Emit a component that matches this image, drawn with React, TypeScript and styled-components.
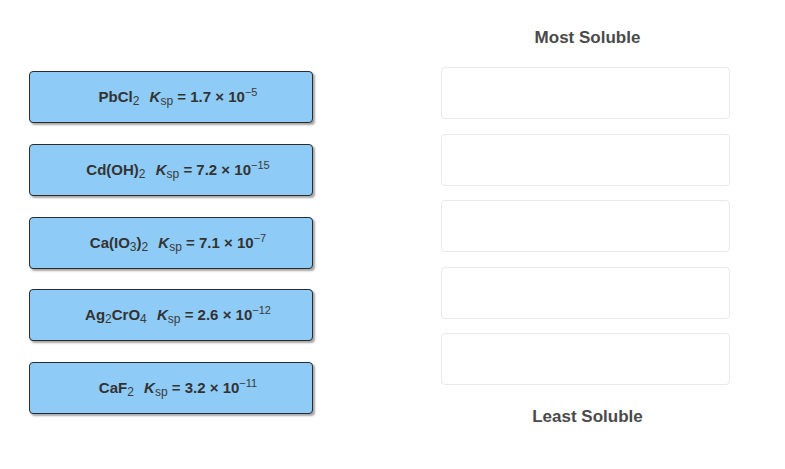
import React from "react";
import styled, { createGlobalStyle } from "styled-components";

const GlobalStyle = createGlobalStyle`
  body {
    margin: 0;
    background: #ffffff;
    font-family: "Liberation Sans", Arial, Helvetica, sans-serif;
  }
`;

const StyledWrapper = styled.div`
  width: 785px;
  height: 469px;
  display: flex;
  align-items: flex-start;
`;

const StyledCardColumn = styled.div`
  display: flex;
  flex-direction: column;
  gap: 20.75px;
  margin-top: 71px;
  margin-left: 29px;
  width: 284px;
`;

const StyledCard = styled.div`
  box-sizing: border-box;
  height: 52px;
  display: flex;
  align-items: center;
  justify-content: center;
  padding-left: 14px;
  background-color: #8ecbf6;
  border: 1px solid #2c2c2c;
  border-radius: 4px;
  box-shadow: 2px 2px 2px rgba(0, 0, 0, 0.35);
`;

const StyledLabel = styled.span`
  color: #333333;
  font-size: 15px;
  line-height: 18px;
  font-weight: bold;
  white-space: nowrap;
`;

const Sub = styled.sub`
  font-weight: normal;
  font-size: 12px;
  vertical-align: -3px;
  line-height: 0;
  color: #3a3a3a;
`;

const Sup = styled.sup`
  font-weight: normal;
  font-size: 11px;
  vertical-align: 6px;
  line-height: 0;
  color: #3a3a3a;
`;

const K = styled.i`
  margin-left: 6px;
`;

const StyledTargetColumn = styled.div`
  display: flex;
  flex-direction: column;
  align-items: stretch;
  margin-left: 128px;
  margin-top: 28px;
  width: 289px;
`;

const StyledHeading = styled.div<{ $bottom?: boolean }>`
  text-align: center;
  padding-left: 4px;
  font-size: 17px;
  line-height: 20px;
  font-weight: bold;
  color: #4a4a4a;
  margin: ${(p) => (p.$bottom ? "22px 0 0" : "0 0 19px")};
`;

const StyledSlots = styled.div`
  display: flex;
  flex-direction: column;
  gap: 14.5px;
`;

const StyledSlot = styled.div`
  box-sizing: border-box;
  height: 52px;
  border: 1px solid #e9e9e9;
  border-radius: 4px;
  background: #ffffff;
`;

type Item = {
  formula: React.ReactNode;
  value: string;
  exp: string;
};

const items: Item[] = [
  { formula: <>PbCl<Sub>2</Sub></>, value: "1.7", exp: "−5" },
  { formula: <>Cd(OH)<Sub>2</Sub></>, value: "7.2", exp: "−15" },
  { formula: <>Ca(IO<Sub>3</Sub>)<Sub>2</Sub></>, value: "7.1", exp: "−7" },
  { formula: <>Ag<Sub>2</Sub>CrO<Sub>4</Sub></>, value: "2.6", exp: "−12" },
  { formula: <>CaF<Sub>2</Sub></>, value: "3.2", exp: "−11" },
];

const App: React.FC = () => {
  return (
    <>
      <GlobalStyle />
      <StyledWrapper>
        <StyledCardColumn>
          {items.map((item, i) => (
            <StyledCard key={i}>
              <StyledLabel>
                {item.formula} <K>K</K>
                <Sub>sp</Sub> = {item.value} × 10<Sup>{item.exp}</Sup>
              </StyledLabel>
            </StyledCard>
          ))}
        </StyledCardColumn>
        <StyledTargetColumn>
          <StyledHeading>Most Soluble</StyledHeading>
          <StyledSlots>
            {items.map((_, i) => (
              <StyledSlot key={i} />
            ))}
          </StyledSlots>
          <StyledHeading $bottom>Least Soluble</StyledHeading>
        </StyledTargetColumn>
      </StyledWrapper>
    </>
  );
};

export default App;
